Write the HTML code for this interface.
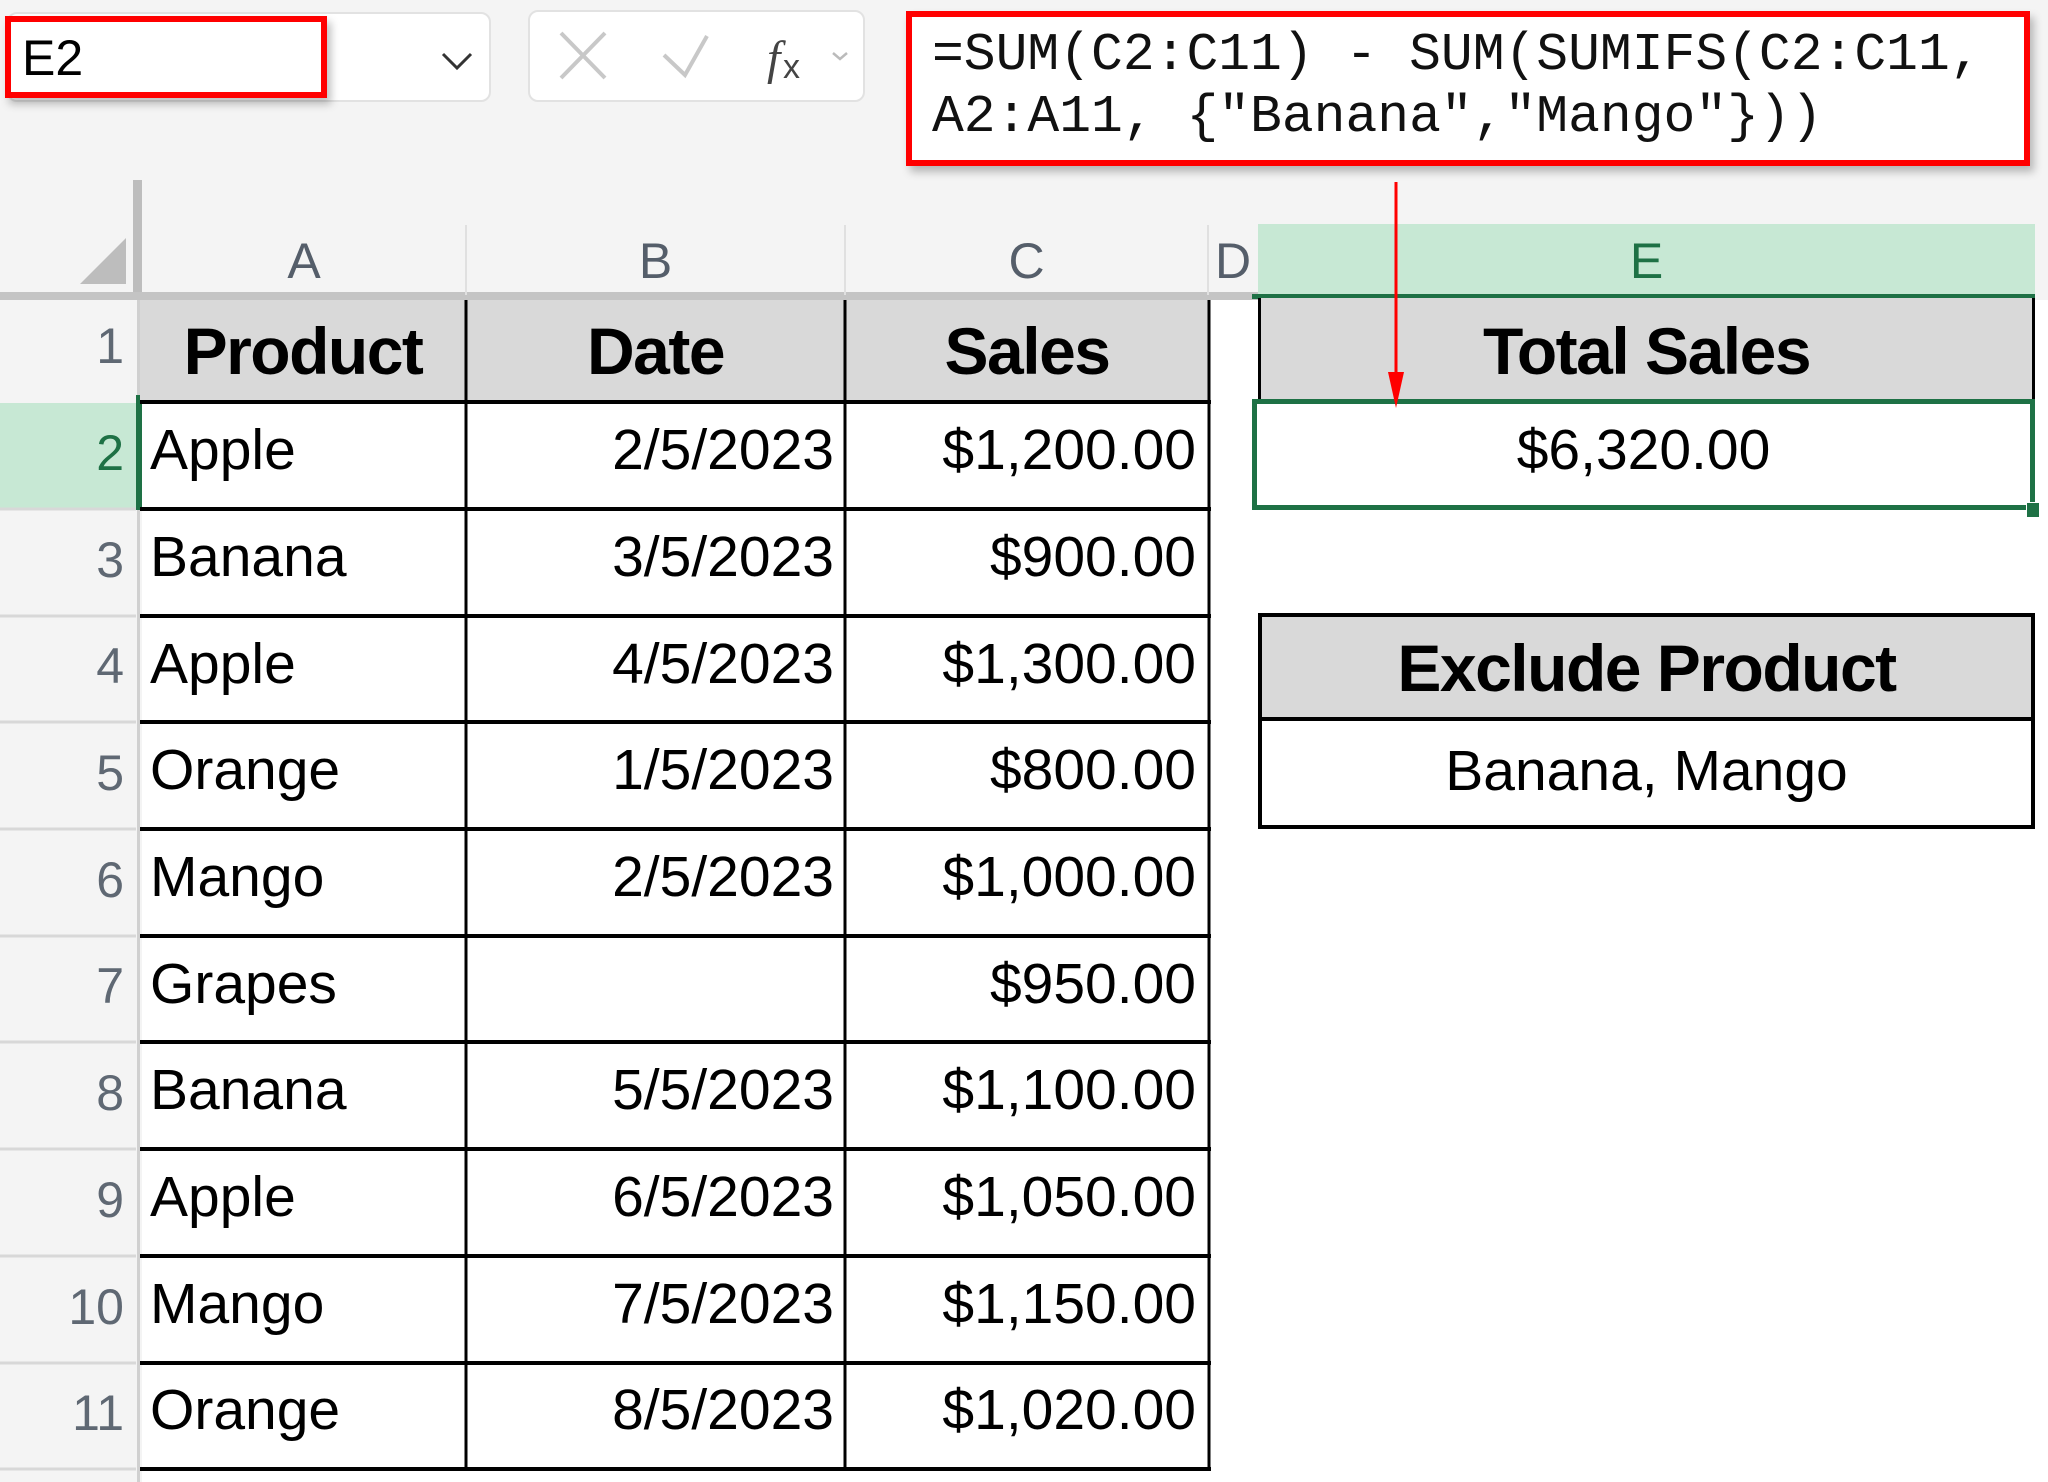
<!DOCTYPE html>
<html><head><meta charset="utf-8"><style>
*{margin:0;padding:0;box-sizing:border-box}
body{width:2048px;height:1482px;background:#f4f4f4;position:relative;overflow:hidden;font-family:"Liberation Sans",Arial,sans-serif}
.a{position:absolute}
.hdrtxt{font-size:50px;color:#555e6a;text-align:center;line-height:74px}
.rn{position:absolute;left:0;width:124px;text-align:right;font-size:50px;color:#5f6873}
.cell{position:absolute;font-size:57px;color:#000;white-space:nowrap}
.h{font-weight:bold;font-size:66px;letter-spacing:-1.5px;text-align:center}
</style></head><body>
<div class="a" style="left:7px;top:12px;width:484px;height:90px;background:#fff;border:2px solid #e2e2e2;border-radius:10px"></div>
<div class="a" style="left:5px;top:16px;width:322px;height:82px;border:6px solid #f00;box-shadow:4px 6px 8px rgba(0,0,0,.25)"></div>
<div class="a" style="left:22px;top:28px;font-size:50px;line-height:60px">E2</div>
<svg class="a" style="left:440px;top:50px" width="34" height="22"><path d="M3 4 L17 18 L31 4" fill="none" stroke="#333" stroke-width="3"/></svg>
<div class="a" style="left:528px;top:10px;width:337px;height:92px;background:#fff;border:2px solid #e2e2e2;border-radius:10px"></div>
<svg class="a" style="left:555px;top:28px" width="300" height="56">
<path d="M6 5 L50 50 M50 5 L6 50" stroke="#c8c8c8" stroke-width="4" fill="none"/>
<path d="M109 27 L130 47 L152 8" stroke="#c8c8c8" stroke-width="4" fill="none"/>
<text x="212" y="46" font-family="Liberation Serif,serif" font-style="italic" font-size="48" fill="#444">f</text>
<text x="228" y="50" font-family="Liberation Sans,sans-serif" font-size="34" fill="#444">x</text>
<path d="M278 25 L285 31 L292 25" stroke="#bbb" stroke-width="2.5" fill="none"/>
</svg>
<div class="a" style="left:906px;top:11px;width:1124px;height:155px;background:#fff;border:6px solid #f00;box-shadow:4px 6px 8px rgba(0,0,0,.25)"></div>
<div class="a" style="left:932px;top:24px;font-family:'Liberation Mono',monospace;font-size:53px;line-height:62px;color:#111;white-space:pre">=SUM(C2:C11) - SUM(SUMIFS(C2:C11,
A2:A11, {"Banana","Mango"}))</div>
<div class="a" style="left:133px;top:180px;width:9px;height:120px;background:#bdbdbd"></div>
<svg class="a" style="left:78px;top:236px" width="50" height="50"><path d="M48 2 L48 48 L2 48 Z" fill="#bdbdbd"/></svg>
<div class="a" style="left:0;top:292px;width:1258px;height:8px;background:#c4c4c4"></div>
<div class="a" style="left:465px;top:225px;width:2px;height:70px;background:#e0e0e0"></div>
<div class="a" style="left:844px;top:225px;width:2px;height:70px;background:#e0e0e0"></div>
<div class="a" style="left:1207px;top:225px;width:2px;height:70px;background:#e0e0e0"></div>
<div class="a" style="left:1258px;top:224px;width:777px;height:72px;background:#c7e8d4"></div>
<div class="a hdrtxt" style="left:142px;top:224px;width:324px">A</div>
<div class="a hdrtxt" style="left:466px;top:224px;width:379px">B</div>
<div class="a hdrtxt" style="left:845px;top:224px;width:363px">C</div>
<div class="a hdrtxt" style="left:1208px;top:224px;width:50px">D</div>
<div class="a hdrtxt" style="left:1258px;top:224px;width:777px;color:#1e7145">E</div>
<div class="a" style="left:1252px;top:294px;width:783px;height:5px;background:#1e7145"></div>
<div class="a" style="left:0;top:300px;width:140px;height:1182px;background:#f4f4f4;border-right:3px solid #d0d0d0"></div>
<div class="a" style="left:0;top:403px;width:137px;height:106px;background:#c7e8d4"></div>
<div class="a" style="left:136px;top:395px;width:6px;height:115px;background:#1e7145"></div>
<div class="a" style="left:142px;top:300px;width:1906px;height:1182px;background:#fff"></div>
<div class="a" style="left:1254px;top:300px;width:794px;height:1182px;background:#fff"></div>
<div class="a" style="left:140px;top:300px;width:1070px;height:102px;background:#d9d9d9"></div>
<svg class="a" style="left:0;top:0" width="2048" height="1482">
<g stroke="#000" stroke-width="3">
<line x1="466" y1="300" x2="466" y2="1469"/><line x1="845" y1="300" x2="845" y2="1469"/><line x1="1209" y1="300" x2="1209" y2="1469"/>
</g>
<g stroke="#000" stroke-width="4">
<line x1="140" y1="402" x2="1211" y2="402"/><line x1="140" y1="509" x2="1211" y2="509"/><line x1="140" y1="616" x2="1211" y2="616"/><line x1="140" y1="722" x2="1211" y2="722"/><line x1="140" y1="829" x2="1211" y2="829"/><line x1="140" y1="936" x2="1211" y2="936"/><line x1="140" y1="1042" x2="1211" y2="1042"/><line x1="140" y1="1149" x2="1211" y2="1149"/><line x1="140" y1="1256" x2="1211" y2="1256"/><line x1="140" y1="1363" x2="1211" y2="1363"/><line x1="140" y1="1469" x2="1211" y2="1469"/>
</g>
<g stroke="#d8d8d8" stroke-width="3">
<line x1="0" y1="509" x2="136" y2="509"/><line x1="0" y1="616" x2="136" y2="616"/><line x1="0" y1="722" x2="136" y2="722"/><line x1="0" y1="829" x2="136" y2="829"/><line x1="0" y1="936" x2="136" y2="936"/><line x1="0" y1="1042" x2="136" y2="1042"/><line x1="0" y1="1149" x2="136" y2="1149"/><line x1="0" y1="1256" x2="136" y2="1256"/><line x1="0" y1="1363" x2="136" y2="1363"/><line x1="0" y1="1469" x2="136" y2="1469"/>
</g>
</svg>
<div class="rn" style="top:317px">1</div>
<div class="rn" style="top:424px;color:#1e7145">2</div>
<div class="rn" style="top:531px">3</div>
<div class="rn" style="top:637px">4</div>
<div class="rn" style="top:744px">5</div>
<div class="rn" style="top:851px">6</div>
<div class="rn" style="top:957px">7</div>
<div class="rn" style="top:1064px">8</div>
<div class="rn" style="top:1171px">9</div>
<div class="rn" style="top:1278px">10</div>
<div class="rn" style="top:1384px">11</div>

<div class="cell h" style="left:140px;top:313px;width:326px">Product</div>
<div class="cell h" style="left:466px;top:313px;width:379px">Date</div>
<div class="cell h" style="left:845px;top:313px;width:364px">Sales</div>

<div class="cell" style="left:150px;top:417px">Apple</div><div class="cell" style="right:1214px;top:417px">2/5/2023</div><div class="cell" style="right:852px;top:417px">$1,200.00</div>
<div class="cell" style="left:150px;top:524px">Banana</div><div class="cell" style="right:1214px;top:524px">3/5/2023</div><div class="cell" style="right:852px;top:524px">$900.00</div>
<div class="cell" style="left:150px;top:631px">Apple</div><div class="cell" style="right:1214px;top:631px">4/5/2023</div><div class="cell" style="right:852px;top:631px">$1,300.00</div>
<div class="cell" style="left:150px;top:737px">Orange</div><div class="cell" style="right:1214px;top:737px">1/5/2023</div><div class="cell" style="right:852px;top:737px">$800.00</div>
<div class="cell" style="left:150px;top:844px">Mango</div><div class="cell" style="right:1214px;top:844px">2/5/2023</div><div class="cell" style="right:852px;top:844px">$1,000.00</div>
<div class="cell" style="left:150px;top:951px">Grapes</div><div class="cell" style="right:852px;top:951px">$950.00</div>
<div class="cell" style="left:150px;top:1057px">Banana</div><div class="cell" style="right:1214px;top:1057px">5/5/2023</div><div class="cell" style="right:852px;top:1057px">$1,100.00</div>
<div class="cell" style="left:150px;top:1164px">Apple</div><div class="cell" style="right:1214px;top:1164px">6/5/2023</div><div class="cell" style="right:852px;top:1164px">$1,050.00</div>
<div class="cell" style="left:150px;top:1271px">Mango</div><div class="cell" style="right:1214px;top:1271px">7/5/2023</div><div class="cell" style="right:852px;top:1271px">$1,150.00</div>
<div class="cell" style="left:150px;top:1377px">Orange</div><div class="cell" style="right:1214px;top:1377px">8/5/2023</div><div class="cell" style="right:852px;top:1377px">$1,020.00</div>

<div class="a" style="left:1258px;top:298px;width:777px;height:104px;background:#d9d9d9;border-left:3px solid #000;border-right:3px solid #000"></div>
<div class="cell h" style="left:1258px;top:313px;width:777px">Total Sales</div>
<div class="a" style="left:1252px;top:399px;width:783px;height:111px;border:5px solid #1e7145;background:#fff"></div>
<div class="cell" style="left:1252px;top:417px;width:783px;text-align:center">$6,320.00</div>
<div class="a" style="left:2026px;top:502px;width:14px;height:16px;background:#1e7145;border:1px solid #fff"></div>

<div class="a" style="left:1258px;top:613px;width:777px;height:216px;border:4px solid #000;background:#fff"></div>
<div class="a" style="left:1262px;top:617px;width:769px;height:104px;background:#d9d9d9;border-bottom:4px solid #000"></div>
<div class="cell h" style="left:1258px;top:630px;width:777px">Exclude Product</div>
<div class="cell" style="left:1258px;top:738px;width:777px;text-align:center">Banana, Mango</div>

<svg class="a" style="left:1380px;top:180px" width="40" height="240">
<line x1="16" y1="2" x2="16" y2="200" stroke="#f00" stroke-width="3"/>
<path d="M8 192 L24 192 L16 228 Z" fill="#f00"/>
</svg>
</body></html>
